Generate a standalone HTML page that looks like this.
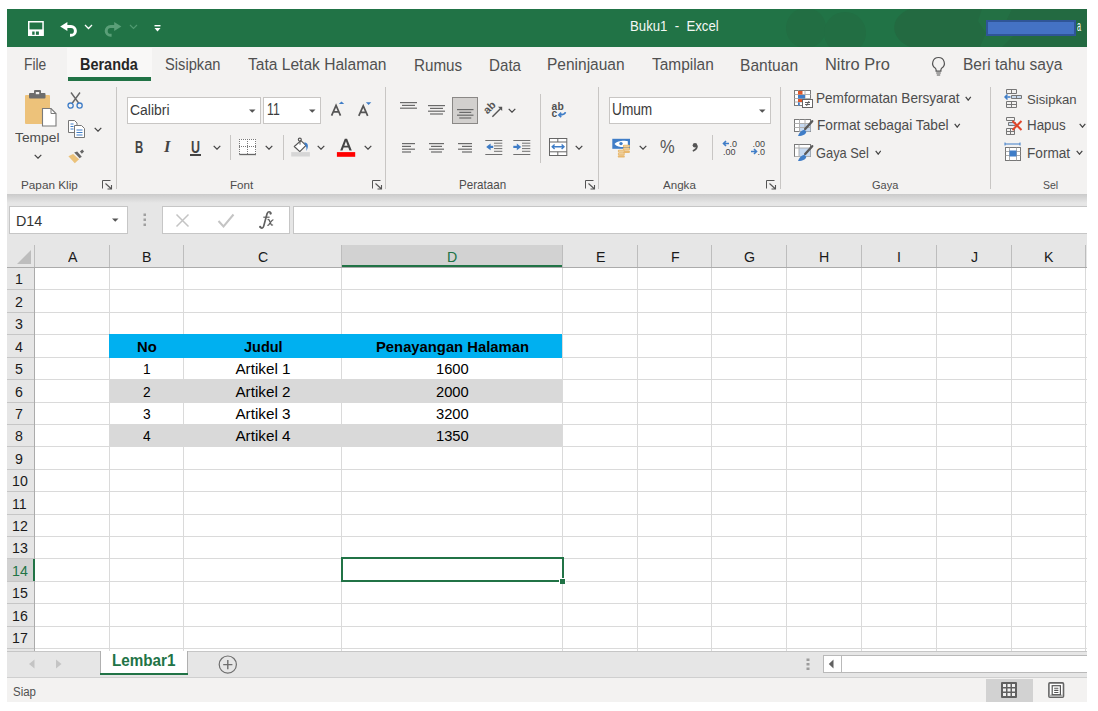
<!DOCTYPE html><html><head><meta charset="utf-8"><style>html,body{margin:0;padding:0}body{width:1098px;height:711px;position:relative;overflow:hidden;background:#fff;font-family:"Liberation Sans",sans-serif}</style></head><body><div style="position:absolute;left:7px;top:9px;width:1080px;height:38px;background:#217346"></div><div style="position:absolute;left:7px;top:47px;width:1080px;height:147px;background:#F3F2F1"></div><div style="position:absolute;left:7px;top:194px;width:1080px;height:73px;background:#E6E6E6"></div><div style="position:absolute;left:7px;top:194px;width:1080px;height:9px;background:linear-gradient(#CACACA,#E6E6E6)"></div><div style="position:absolute;left:7px;top:267px;width:1080px;height:384px;background:#FFFFFF"></div><div style="position:absolute;left:7px;top:651px;width:1080px;height:27px;background:#E6E6E6"></div><div style="position:absolute;left:7px;top:678px;width:1080px;height:24px;background:#F3F2F1"></div><svg style="position:absolute;left:760px;top:9px;" width="327" height="38" viewBox="0 0 327 38"><circle cx="46" cy="19" r="20" fill="#226E43"/><circle cx="85" cy="24" r="21" fill="#226E43"/><path d="M150 0H327V38H150C130 30 128 8 150 0z" fill="#236A41"/><path d="M222 0h30l-6 12 8 14-12 12h-22l6-14-8-12z" fill="#247346" opacity="0.7"/></svg><div style="position:absolute;left:629.60px;top:26.32px;font-size:14.34px;font-weight:400;color:#F4F8F5;line-height:0;white-space:pre;transform-origin:0 0;transform:scaleX(0.9205);">Buku1  -  Excel</div><svg style="position:absolute;left:28px;top:21px;" width="16" height="15" viewBox="0 0 16 15"><rect x="0.75" y="0.75" width="14.3" height="13.6" fill="none" stroke="#fff" stroke-width="1.5"/><rect x="0.5" y="8.4" width="15" height="6.4" fill="#fff"/><rect x="4.2" y="10.5" width="2.4" height="3.3" fill="#217346"/><rect x="7.9" y="10.5" width="3" height="3.3" fill="#217346"/></svg><svg style="position:absolute;left:55px;top:15px;" width="25" height="25" viewBox="0 0 25 25"><path d="M5.2 11.5L12.4 7.1V15.9z" fill="#fff"/><path d="M11 11.5H16A4.4 4.4 0 0 1 16 20.3H15" fill="none" stroke="#fff" stroke-width="3"/></svg><svg style="position:absolute;left:84px;top:23px;" width="9" height="7" viewBox="0 0 9 7"><path d="M1 2l3.5 3.5L8 2" fill="none" stroke="#fff" stroke-width="1.3"/></svg><svg style="position:absolute;left:100px;top:15px;" width="25" height="25" viewBox="0 0 25 25"><path d="M21.4 11.5L14.2 7.1V15.9z" fill="#5A9F78"/><path d="M15.6 11.5H10.6A4.4 4.4 0 0 0 10.6 20.3H11.6" fill="none" stroke="#5A9F78" stroke-width="3"/></svg><svg style="position:absolute;left:129px;top:23px;" width="9" height="7" viewBox="0 0 9 7"><path d="M1 2l3.5 3.5L8 2" fill="none" stroke="#4f9a70" stroke-width="1.2"/></svg><svg style="position:absolute;left:154px;top:24px;" width="8" height="9" viewBox="0 0 8 9"><rect x="0.5" y="1" width="6" height="1.4" fill="#fff"/><path d="M0.5 4h6L3.5 7.5z" fill="#fff"/></svg><div style="position:absolute;left:986px;top:20px;width:90px;height:16px;background:#4472C4;box-sizing:border-box;border:2px solid #2F5597"></div><div style="position:absolute;left:1076.50px;top:26.07px;font-size:14.20px;font-weight:400;color:#fff;line-height:0;white-space:pre;transform-origin:0 0;transform:scaleX(0.5029);">a</div><div style="position:absolute;left:67px;top:48px;width:85px;height:29px;background:#F9F8F7"></div><div style="position:absolute;left:68px;top:77px;width:83px;height:4px;background:#217346"></div><div style="position:absolute;left:23.60px;top:65.19px;font-size:15.59px;font-weight:400;color:#505050;line-height:0;white-space:pre;transform-origin:0 0;transform:scaleX(0.8887);">File</div><div style="position:absolute;left:164.50px;top:65.19px;font-size:15.59px;font-weight:400;color:#505050;line-height:0;white-space:pre;transform-origin:0 0;transform:scaleX(0.9420);">Sisipkan</div><div style="position:absolute;left:248.20px;top:65.19px;font-size:15.59px;font-weight:400;color:#505050;line-height:0;white-space:pre;transform-origin:0 0;transform:scaleX(0.9997);">Tata Letak Halaman</div><div style="position:absolute;left:413.80px;top:64.92px;font-size:16.38px;font-weight:400;color:#505050;line-height:0;white-space:pre;transform-origin:0 0;transform:scaleX(0.9284);">Rumus</div><div style="position:absolute;left:488.90px;top:64.92px;font-size:16.38px;font-weight:400;color:#505050;line-height:0;white-space:pre;transform-origin:0 0;transform:scaleX(0.9268);">Data</div><div style="position:absolute;left:547.10px;top:65.19px;font-size:15.59px;font-weight:400;color:#505050;line-height:0;white-space:pre;transform-origin:0 0;transform:scaleX(0.9948);">Peninjauan</div><div style="position:absolute;left:651.70px;top:65.19px;font-size:15.59px;font-weight:400;color:#505050;line-height:0;white-space:pre;transform-origin:0 0;transform:scaleX(0.9913);">Tampilan</div><div style="position:absolute;left:740.30px;top:64.92px;font-size:16.38px;font-weight:400;color:#505050;line-height:0;white-space:pre;transform-origin:0 0;transform:scaleX(0.9524);">Bantuan</div><div style="position:absolute;left:824.80px;top:65.19px;font-size:15.59px;font-weight:400;color:#505050;line-height:0;white-space:pre;transform-origin:0 0;transform:scaleX(1.0539);">Nitro Pro</div><div style="position:absolute;left:963.00px;top:65.19px;font-size:15.59px;font-weight:400;color:#505050;line-height:0;white-space:pre;transform-origin:0 0;transform:scaleX(0.9983);">Beri tahu saya</div><div style="position:absolute;left:80.20px;top:65.19px;font-size:15.59px;font-weight:700;color:#262626;line-height:0;white-space:pre;transform-origin:0 0;transform:scaleX(0.9280);">Beranda</div><svg style="position:absolute;left:930px;top:56px;" width="17" height="20" viewBox="0 0 17 20"><path d="M8.5 1.5a5.8 5.8 0 0 0-3.3 10.6c.6.5.9 1.2.9 2v1h4.8v-1c0-.8.3-1.5.9-2A5.8 5.8 0 0 0 8.5 1.5z" fill="none" stroke="#555" stroke-width="1.2"/><path d="M6.2 17h4.6M6.8 19h3.4" stroke="#555" stroke-width="1.2"/></svg><div style="position:absolute;left:116px;top:87px;width:1px;height:102px;background:#C8C6C4"></div><div style="position:absolute;left:385px;top:87px;width:1px;height:102px;background:#C8C6C4"></div><div style="position:absolute;left:598px;top:87px;width:1px;height:102px;background:#C8C6C4"></div><div style="position:absolute;left:780px;top:87px;width:1px;height:102px;background:#C8C6C4"></div><div style="position:absolute;left:990px;top:87px;width:1px;height:102px;background:#C8C6C4"></div><div style="position:absolute;left:230px;top:135px;width:1px;height:25px;background:#C8C6C4"></div><div style="position:absolute;left:283px;top:135px;width:1px;height:25px;background:#C8C6C4"></div><div style="position:absolute;left:540px;top:94px;width:1px;height:69px;background:#C8C6C4"></div><div style="position:absolute;left:712px;top:135px;width:1px;height:25px;background:#C8C6C4"></div><svg style="position:absolute;left:24px;top:89px;" width="36" height="40" viewBox="0 0 36 40"><rect x="1" y="6" width="25" height="29" rx="1" fill="#EDC27A"/><rect x="5" y="4" width="16.5" height="5.5" rx="1" fill="#6D6D6D"/><rect x="10" y="1" width="7" height="5" rx="1" fill="#6D6D6D"/><rect x="11.8" y="3" width="3.4" height="2.2" fill="#F3F2F1"/><path d="M18.5 19.5h8.5l5 5v12.5h-13.5z" fill="#fff" stroke="#7a7a7a" stroke-width="1.1"/><path d="M27 19.5v5h5" fill="none" stroke="#7a7a7a" stroke-width="1"/></svg><div style="position:absolute;left:15.00px;top:138.36px;font-size:13.38px;font-weight:400;color:#4d4d4d;line-height:0;white-space:pre;transform-origin:0 0;transform:scaleX(1.0313);">Tempel</div><svg style="position:absolute;left:34px;top:154px;" width="8" height="5" viewBox="0 0 8 5"><path d="M0.7 0.8L4.0 4.2L7.3 0.8" fill="none" stroke="#444" stroke-width="1.2"/></svg><svg style="position:absolute;left:66px;top:91px;" width="19" height="19" viewBox="0 0 19 19"><path d="M5 1.5l8 11M14 1.5l-8 11" stroke="#666" stroke-width="1.4"/><circle cx="4.6" cy="14.6" r="2.6" fill="none" stroke="#3f7dc7" stroke-width="1.3"/><circle cx="13.6" cy="14.6" r="2.6" fill="none" stroke="#3f7dc7" stroke-width="1.3"/></svg><svg style="position:absolute;left:68px;top:120px;" width="18" height="19" viewBox="0 0 18 19"><path d="M0.5 0.5h6l2.5 2.5v9.5H0.5z" fill="#fff" stroke="#777" stroke-width="1"/><path d="M2.5 4h3M2.5 6.5h3M2.5 9h3" stroke="#3f7dc7" stroke-width="1"/><path d="M6.5 5.5h7l3 3V17.5H6.5z" fill="#fff" stroke="#777" stroke-width="1"/><path d="M8.5 10h6M8.5 12.5h6M8.5 15h6" stroke="#3f7dc7" stroke-width="1"/></svg><svg style="position:absolute;left:94px;top:127px;" width="8" height="5" viewBox="0 0 8 5"><path d="M0.7 0.8L4.0 4.2L7.3 0.8" fill="none" stroke="#444" stroke-width="1.2"/></svg><svg style="position:absolute;left:62px;top:144px;" width="26" height="24" viewBox="0 0 26 24"><path d="M6.4 12.2L11.1 10L17.1 15.2L12.8 19.3z" fill="#EBC27A"/><path d="M12.2 8.4L15.2 7.4L19.8 12.7L17.6 14.2z" fill="#666"/><path d="M17.9 7.4L20.3 5.4L22.1 7.6L19.8 9.8z" fill="#666"/></svg><div style="position:absolute;left:21.40px;top:185.12px;font-size:10.90px;font-weight:400;color:#4d4d4d;line-height:0;white-space:pre;transform-origin:0 0;transform:scaleX(1.0781);">Papan Klip</div><svg style="position:absolute;left:102px;top:180px;" width="11" height="10" viewBox="0 0 11 10"><path d="M0.5 8.5V0.5h8" fill="none" stroke="#555" stroke-width="1"/><path d="M3.5 3.5l6 5.5M9.5 5v4h-4" fill="none" stroke="#555" stroke-width="1.1"/></svg><div style="position:absolute;left:127px;top:97px;width:134px;height:27px;background:#fff;box-sizing:border-box;border:1px solid #C8C6C4"></div><div style="position:absolute;left:263px;top:97px;width:58px;height:27px;background:#fff;box-sizing:border-box;border:1px solid #C8C6C4"></div><div style="position:absolute;left:129.70px;top:110.43px;font-size:14.90px;font-weight:400;color:#3b3b3b;line-height:0;white-space:pre;transform-origin:0 0;transform:scaleX(0.9353);">Calibri</div><div style="position:absolute;left:266.80px;top:110.17px;font-size:15.65px;font-weight:400;color:#3b3b3b;line-height:0;white-space:pre;transform-origin:0 0;transform:scaleX(0.7802);">11</div><svg style="position:absolute;left:249px;top:109px;" width="7" height="4" viewBox="0 0 7 4"><path d="M0 0.5h6.5L3.25 3.8z" fill="#555"/></svg><svg style="position:absolute;left:309px;top:109px;" width="7" height="4" viewBox="0 0 7 4"><path d="M0 0.5h6.5L3.25 3.8z" fill="#555"/></svg><svg style="position:absolute;left:330px;top:100px;" width="16" height="17" viewBox="0 0 16 17"><path d="M1.6 15.6L6.05 5.3L10.5 15.6M3.4 11.9h5.3" fill="none" stroke="#555" stroke-width="1.7"/><path d="M8.8 4L11.5 1.5L14.2 4z" fill="#3f7dc7"/></svg><svg style="position:absolute;left:357px;top:100px;" width="16" height="17" viewBox="0 0 16 17"><path d="M1.8 15.8L6.25 5.9L10.7 15.8M3.6 12.3h5.3" fill="none" stroke="#555" stroke-width="1.7"/><path d="M8.9 2.2H14.3L11.6 5z" fill="#3f7dc7"/></svg><div style="position:absolute;left:134.80px;top:147.12px;font-size:16.09px;font-weight:700;color:#444;line-height:0;white-space:pre;transform-origin:0 0;transform:scaleX(0.7080);">B</div><div style="position:absolute;left:164px;top:137px;font-family:'Liberation Serif';font-style:italic;font-weight:700;font-size:16.5px;line-height:20px;color:#444">I</div><div style="position:absolute;left:190.80px;top:147.12px;font-size:16.09px;font-weight:700;color:#444;line-height:0;white-space:pre;transform-origin:0 0;transform:scaleX(0.7770);">U</div><div style="position:absolute;left:190px;top:154px;width:11px;height:1.5px;background:#444"></div><svg style="position:absolute;left:213px;top:145px;" width="8" height="5" viewBox="0 0 8 5"><path d="M0.7 0.8L4.0 4.2L7.3 0.8" fill="none" stroke="#444" stroke-width="1.2"/></svg><svg style="position:absolute;left:239px;top:138px;" width="18" height="18" viewBox="0 0 18 18"><rect x="0.5" y="1" width="16.5" height="15.5" fill="#fff"/><path d="M0 1.5h17M0 8.5h17M0.5 1v15M8.5 1v15M16.5 1v15" fill="none" stroke="#7a7a7a" stroke-width="1" stroke-dasharray="1 1"/><path d="M0.3 16.5h16.6" stroke="#666" stroke-width="1.3"/></svg><svg style="position:absolute;left:265px;top:145px;" width="8" height="5" viewBox="0 0 8 5"><path d="M0.7 0.8L4.0 4.2L7.3 0.8" fill="none" stroke="#444" stroke-width="1.2"/></svg><svg style="position:absolute;left:290px;top:137px;" width="22" height="21" viewBox="0 0 22 21"><path d="M4.3 9.5L10.9 3.6L16 8.4L9.8 14.6z" fill="#fff" stroke="#555" stroke-width="1.2" stroke-linejoin="round"/><circle cx="9.8" cy="2.6" r="1.5" fill="none" stroke="#555" stroke-width="1.1"/><path d="M10 4v3.6" stroke="#555" stroke-width="1"/><path d="M14.3 5.3C17.2 5.6 19.6 8.2 16.4 14C16.7 11 16.2 9 14.8 7.6z" fill="#3f7dc7"/><rect x="1.2" y="15.1" width="18.7" height="4.4" fill="#D6D6D6"/></svg><svg style="position:absolute;left:317px;top:145px;" width="8" height="5" viewBox="0 0 8 5"><path d="M0.7 0.8L4.0 4.2L7.3 0.8" fill="none" stroke="#444" stroke-width="1.2"/></svg><svg style="position:absolute;left:336px;top:137px;" width="20" height="21" viewBox="0 0 20 21"><path fill-rule="evenodd" d="M4.2 13.6L8.8 1.8H11.1L15.8 13.6H13.4L12.3 10.6H7.6L6.5 13.6zM8.3 8.7H11.6L9.95 4.2z" fill="#444"/><rect x="0.9" y="15.1" width="18.3" height="4.7" fill="#FF0000"/></svg><svg style="position:absolute;left:364px;top:145px;" width="8" height="5" viewBox="0 0 8 5"><path d="M0.7 0.8L4.0 4.2L7.3 0.8" fill="none" stroke="#444" stroke-width="1.2"/></svg><div style="position:absolute;left:229.50px;top:184.98px;font-size:11.59px;font-weight:400;color:#4d4d4d;line-height:0;white-space:pre;transform-origin:0 0;transform:scaleX(1.0048);">Font</div><svg style="position:absolute;left:372px;top:180px;" width="11" height="10" viewBox="0 0 11 10"><path d="M0.5 8.5V0.5h8" fill="none" stroke="#555" stroke-width="1"/><path d="M3.5 3.5l6 5.5M9.5 5v4h-4" fill="none" stroke="#555" stroke-width="1.1"/></svg><svg style="position:absolute;left:400px;top:101.5px;" width="20" height="10.399999999999999" viewBox="0 0 20 10.399999999999999"><rect x="0" y="0.0" width="17" height="1.2" fill="#6a6a6a"/><rect x="2" y="2.8" width="13" height="1.2" fill="#6a6a6a"/><rect x="0" y="5.6" width="17" height="1.2" fill="#6a6a6a"/></svg><svg style="position:absolute;left:428px;top:105px;" width="20" height="13.2" viewBox="0 0 20 13.2"><rect x="0" y="0.0" width="17" height="1.2" fill="#6a6a6a"/><rect x="2" y="2.8" width="13" height="1.2" fill="#6a6a6a"/><rect x="0" y="5.6" width="17" height="1.2" fill="#6a6a6a"/><rect x="2" y="8.399999999999999" width="13" height="1.2" fill="#6a6a6a"/></svg><div style="position:absolute;left:452px;top:97px;width:26px;height:27px;background:#D2D0CE;box-sizing:border-box;border:1px solid #8A8886"></div><svg style="position:absolute;left:456.5px;top:109px;" width="20" height="13.2" viewBox="0 0 20 13.2"><rect x="0" y="0.0" width="16.5" height="1.2" fill="#6a6a6a"/><rect x="2.25" y="2.8" width="12" height="1.2" fill="#6a6a6a"/><rect x="0" y="5.6" width="16.5" height="1.2" fill="#6a6a6a"/><rect x="2.25" y="8.399999999999999" width="12" height="1.2" fill="#6a6a6a"/></svg><svg style="position:absolute;left:480px;top:98px;" width="26" height="24" viewBox="0 0 26 24"><text transform="translate(7.4 16.4) rotate(-45)" font-family="Liberation Sans" font-size="10.8" font-weight="700" fill="#555">ab</text><path d="M12.4 18.8L20.6 10.6" fill="none" stroke="#555" stroke-width="1.4"/><path d="M18 8.8h4.2v4.2z" fill="#555"/></svg><svg style="position:absolute;left:508px;top:108px;" width="8" height="5" viewBox="0 0 8 5"><path d="M0.7 0.8L4.0 4.2L7.3 0.8" fill="none" stroke="#444" stroke-width="1.2"/></svg><svg style="position:absolute;left:546px;top:98px;" width="24" height="22" viewBox="0 0 24 22"><text x="5.4" y="11.7" font-family="Liberation Sans" font-size="10.3" font-weight="700" letter-spacing="0.4" fill="#505050">ab</text><text x="5.4" y="19.3" font-family="Liberation Sans" font-size="10.3" font-weight="700" fill="#505050">c</text><path d="M19.4 14.2C19.2 16.2 17.5 16.9 13.5 16.9M15.2 14.6L12.8 16.9L15.2 19.2" fill="none" stroke="#3f7dc7" stroke-width="1.6"/></svg><svg style="position:absolute;left:402px;top:142.5px;" width="20" height="13.2" viewBox="0 0 20 13.2"><rect x="0" y="0.0" width="13" height="1.2" fill="#6a6a6a"/><rect x="0" y="2.8" width="9" height="1.2" fill="#6a6a6a"/><rect x="0" y="5.6" width="13" height="1.2" fill="#6a6a6a"/><rect x="0" y="8.399999999999999" width="9" height="1.2" fill="#6a6a6a"/></svg><svg style="position:absolute;left:429px;top:142.5px;" width="20" height="13.2" viewBox="0 0 20 13.2"><rect x="0" y="0.0" width="15" height="1.2" fill="#6a6a6a"/><rect x="2" y="2.8" width="11" height="1.2" fill="#6a6a6a"/><rect x="0" y="5.6" width="15" height="1.2" fill="#6a6a6a"/><rect x="2" y="8.399999999999999" width="11" height="1.2" fill="#6a6a6a"/></svg><svg style="position:absolute;left:457.5px;top:142.5px;" width="20" height="13.2" viewBox="0 0 20 13.2"><rect x="0" y="0.0" width="14" height="1.2" fill="#6a6a6a"/><rect x="4" y="2.8" width="10" height="1.2" fill="#6a6a6a"/><rect x="0" y="5.6" width="14" height="1.2" fill="#6a6a6a"/><rect x="4" y="8.399999999999999" width="10" height="1.2" fill="#6a6a6a"/></svg><svg style="position:absolute;left:485px;top:139px;" width="18" height="17" viewBox="0 0 18 17"><path d="M0.3 1.5h17M0.3 15.5h17M9 4.2h8.3M9 6.9h8.3M9 9.6h8.3M9 12.3h8.3" stroke="#707070" stroke-width="1"/><path d="M8.2 7.9H2.8" stroke="#3f7dc7" stroke-width="2.2"/><path d="M5.6 4.6L1.2 7.9L5.6 11.2z" fill="#3f7dc7"/></svg><svg style="position:absolute;left:513px;top:139px;" width="18" height="17" viewBox="0 0 18 17"><path d="M0.3 1.5h17M0.3 15.5h17M9 4.2h8.3M9 6.9h8.3M9 9.6h8.3M9 12.3h8.3" stroke="#707070" stroke-width="1"/><path d="M0.3 7.9H5.6" stroke="#3f7dc7" stroke-width="2.2"/><path d="M3.8 4.6L8.2 7.9L3.8 11.2z" fill="#3f7dc7"/></svg><svg style="position:absolute;left:548px;top:137px;" width="20" height="20" viewBox="0 0 20 20"><rect x="1.5" y="1.5" width="17.3" height="17" fill="#fff" stroke="#666" stroke-width="1"/><path d="M1.5 5h17.3M1.5 14.8h17.3M9.8 1.5v3.5M9.8 14.8v3.7" stroke="#666" stroke-width="1"/><path d="M4.2 9.8h11.8M6.6 7.6L4.2 9.8l2.4 2.2M13.6 7.6L16 9.8l-2.4 2.2" fill="none" stroke="#3f7dc7" stroke-width="1.4"/></svg><svg style="position:absolute;left:575px;top:145px;" width="8" height="5" viewBox="0 0 8 5"><path d="M0.7 0.8L4.0 4.2L7.3 0.8" fill="none" stroke="#444" stroke-width="1.2"/></svg><div style="position:absolute;left:458.50px;top:184.78px;font-size:11.88px;font-weight:400;color:#4d4d4d;line-height:0;white-space:pre;transform-origin:0 0;transform:scaleX(0.9783);">Perataan</div><svg style="position:absolute;left:585px;top:180px;" width="11" height="10" viewBox="0 0 11 10"><path d="M0.5 8.5V0.5h8" fill="none" stroke="#555" stroke-width="1"/><path d="M3.5 3.5l6 5.5M9.5 5v4h-4" fill="none" stroke="#555" stroke-width="1.1"/></svg><div style="position:absolute;left:609px;top:97px;width:162px;height:27px;background:#fff;box-sizing:border-box;border:1px solid #C8C6C4"></div><div style="position:absolute;left:611.90px;top:110.37px;font-size:15.65px;font-weight:400;color:#3b3b3b;line-height:0;white-space:pre;transform-origin:0 0;transform:scaleX(0.8743);">Umum</div><svg style="position:absolute;left:759px;top:109px;" width="7" height="4" viewBox="0 0 7 4"><path d="M0 0.5h6.5L3.25 3.8z" fill="#555"/></svg><svg style="position:absolute;left:611px;top:138px;" width="21" height="20" viewBox="0 0 21 20"><rect x="1.3" y="0.8" width="17.7" height="10" fill="#3f7dc7"/><path d="M3.5 6C6 2.3 14 2.3 16.8 3.2V8.6C14 9.5 6 9.5 3.5 6z" fill="#fff"/><circle cx="10" cy="5.6" r="1.7" fill="#3f7dc7"/><g fill="#E8B86E"><rect x="11.8" y="6.8" width="7.2" height="2.6" rx="1.3"/><rect x="11.8" y="9.6" width="7.2" height="2.6" rx="1.3"/><rect x="11.8" y="12.4" width="7.2" height="2.6" rx="1.3"/><rect x="6.8" y="11.8" width="7" height="2.6" rx="1.3"/><rect x="6.8" y="14.6" width="7" height="2.6" rx="1.3"/><rect x="6.8" y="17.2" width="7" height="2.4" rx="1.2"/></g><g fill="#F6E3C2"><rect x="12.8" y="7.7" width="5.2" height="0.8"/><rect x="12.8" y="10.5" width="5.2" height="0.8"/><rect x="7.8" y="12.7" width="5" height="0.8"/><rect x="7.8" y="15.5" width="5" height="0.8"/></g></svg><svg style="position:absolute;left:639px;top:145px;" width="8" height="5" viewBox="0 0 8 5"><path d="M0.7 0.8L4.0 4.2L7.3 0.8" fill="none" stroke="#444" stroke-width="1.2"/></svg><div style="position:absolute;left:659.70px;top:147.31px;font-size:18.99px;font-weight:400;color:#555;line-height:0;white-space:pre;transform-origin:0 0;transform:scaleX(0.8696);">%</div><svg style="position:absolute;left:690px;top:142px;" width="9" height="10" viewBox="0 0 9 10"><circle cx="5" cy="3.3" r="2.3" fill="#555"/><path d="M7.1 3.6C7 6.4 5.6 8 2.8 8.9" fill="none" stroke="#555" stroke-width="1.6"/></svg><svg style="position:absolute;left:722px;top:139px;" width="16" height="17" viewBox="0 0 16 17"><path d="M7 4.5H1.5M4 2L1.5 4.5 4 7" fill="none" stroke="#3f7dc7" stroke-width="1.6"/><text x="7.5" y="8" font-family="Liberation Sans" font-size="9" fill="#444">.0</text><text x="1" y="16" font-family="Liberation Sans" font-size="9" fill="#444">.00</text></svg><svg style="position:absolute;left:750px;top:139px;" width="17" height="17" viewBox="0 0 17 17"><text x="2.6" y="8" font-family="Liberation Sans" font-size="9" fill="#444">.00</text><path d="M1 12.5H6.5M4 10l2.5 2.5L4 15" fill="none" stroke="#3f7dc7" stroke-width="1.6"/><text x="7.5" y="16" font-family="Liberation Sans" font-size="9" fill="#444">.0</text></svg><div style="position:absolute;left:663.10px;top:185.07px;font-size:10.76px;font-weight:400;color:#4d4d4d;line-height:0;white-space:pre;transform-origin:0 0;transform:scaleX(1.0768);">Angka</div><svg style="position:absolute;left:766px;top:180px;" width="11" height="10" viewBox="0 0 11 10"><path d="M0.5 8.5V0.5h8" fill="none" stroke="#555" stroke-width="1"/><path d="M3.5 3.5l6 5.5M9.5 5v4h-4" fill="none" stroke="#555" stroke-width="1.1"/></svg><svg style="position:absolute;left:794px;top:90px;" width="20" height="19" viewBox="0 0 20 19"><rect x="0.5" y="0.5" width="16" height="15" fill="#fff" stroke="#7a7a7a"/><path d="M4.5 0.5v15M11 0.5v15M0.5 4.5h16M0.5 8.5h16M0.5 12h16" stroke="#b0b0b0" stroke-width="1"/><rect x="4" y="1" width="4.5" height="3.5" fill="#E0572A"/><rect x="4" y="5" width="7" height="3.5" fill="#3f7dc7"/><rect x="4" y="9" width="4" height="3" fill="#E0572A"/><rect x="4" y="12.5" width="1.8" height="3" fill="#3f7dc7"/><rect x="8.5" y="9.5" width="10" height="8" fill="#fff" stroke="#666"/><path d="M11 12.5h5M11 14.5h5M15 11l-2.5 5" stroke="#555" stroke-width="0.9"/></svg><div style="position:absolute;left:816.30px;top:99.31px;font-size:13.79px;font-weight:400;color:#4d4d4d;line-height:0;white-space:pre;transform-origin:0 0;transform:scaleX(0.9859);">Pemformatan Bersyarat</div><svg style="position:absolute;left:965px;top:96px;" width="6.5" height="5" viewBox="0 0 6.5 5"><path d="M0.7 0.8L3.2 4.2L5.8 0.8" fill="none" stroke="#444" stroke-width="1.2"/></svg><svg style="position:absolute;left:794px;top:118px;" width="20" height="19" viewBox="0 0 20 19"><rect x="0.5" y="1.5" width="16" height="12" fill="#fff" stroke="#7a7a7a"/><rect x="5.5" y="5.5" width="11" height="8" fill="#C5D9F1"/><path d="M5.5 1.5v12M11 1.5v12M0.5 5.5h16M0.5 9.5h16" stroke="#b0b0b0" stroke-width="1"/><path d="M18.2 3.2L11.2 11" stroke="#5a5a5a" stroke-width="2.4" stroke-linecap="round"/><path d="M4 18c1-3.6 3.5-5.6 6.3-6.3l2 2c-.5 2.6-3 4.3-8.3 4.3z" fill="#3f7dc7"/></svg><div style="position:absolute;left:816.90px;top:125.71px;font-size:13.79px;font-weight:400;color:#4d4d4d;line-height:0;white-space:pre;transform-origin:0 0;transform:scaleX(0.9946);">Format sebagai Tabel</div><svg style="position:absolute;left:954px;top:123px;" width="6.5" height="5" viewBox="0 0 6.5 5"><path d="M0.7 0.8L3.2 4.2L5.8 0.8" fill="none" stroke="#444" stroke-width="1.2"/></svg><svg style="position:absolute;left:794px;top:143px;" width="20" height="19" viewBox="0 0 20 19"><rect x="0.5" y="1.5" width="16" height="12" fill="#fff" stroke="#7a7a7a"/><rect x="5" y="5" width="11.5" height="8.5" fill="#C5D9F1"/><path d="M0.5 5h16M0.5 13.5h16M5 1.5v12" stroke="#b0b0b0" stroke-width="1"/><path d="M18.2 3.2L11.2 11" stroke="#5a5a5a" stroke-width="2.4" stroke-linecap="round"/><path d="M4 18c1-3.6 3.5-5.6 6.3-6.3l2 2c-.5 2.6-3 4.3-8.3 4.3z" fill="#3f7dc7"/></svg><div style="position:absolute;left:816.30px;top:153.07px;font-size:13.93px;font-weight:400;color:#4d4d4d;line-height:0;white-space:pre;transform-origin:0 0;transform:scaleX(0.9228);">Gaya Sel</div><svg style="position:absolute;left:874.5px;top:150px;" width="6.5" height="5" viewBox="0 0 6.5 5"><path d="M0.7 0.8L3.2 4.2L5.8 0.8" fill="none" stroke="#444" stroke-width="1.2"/></svg><div style="position:absolute;left:871.80px;top:185.13px;font-size:11.14px;font-weight:400;color:#4d4d4d;line-height:0;white-space:pre;transform-origin:0 0;transform:scaleX(0.9892);">Gaya</div><svg style="position:absolute;left:1004px;top:89px;" width="19" height="20" viewBox="0 0 19 20"><path d="M2.5 0.5h10v4h-10zM2.5 12.5h10v6h-10zM7.5 0.5v4M2.5 15.5h10M7.5 12.5v6" fill="none" stroke="#777" stroke-width="1"/><path d="M7.5 6.5h10v3h-10zM12.5 6.5v3" fill="#C9D9EC" stroke="#777" stroke-width="1"/><path d="M6.5 8h-5M3.5 5.5L1 8l2.5 2.5" fill="none" stroke="#3f7dc7" stroke-width="1.5"/></svg><div style="position:absolute;left:1026.80px;top:99.55px;font-size:13.10px;font-weight:400;color:#4d4d4d;line-height:0;white-space:pre;transform-origin:0 0;transform:scaleX(1.0014);">Sisipkan</div><svg style="position:absolute;left:1004px;top:117px;" width="20" height="18" viewBox="0 0 20 18"><path d="M2.5 0.5h8v3h-8zM2.5 11.5h8v6h-8zM6.5 11.5v6M2.5 14.5h8" fill="none" stroke="#777" stroke-width="1"/><path d="M4.5 5.5h7v3h-7z" fill="#C9D9EC" stroke="#777" stroke-width="1"/><path d="M8.5 4l9 9M17.5 4l-9 9" stroke="#E0452A" stroke-width="2"/></svg><div style="position:absolute;left:1026.80px;top:126.22px;font-size:13.77px;font-weight:400;color:#4d4d4d;line-height:0;white-space:pre;transform-origin:0 0;transform:scaleX(0.9701);">Hapus</div><svg style="position:absolute;left:1078.5px;top:123px;" width="7" height="5" viewBox="0 0 7 5"><path d="M0.7 0.8L3.5 4.2L6.3 0.8" fill="none" stroke="#444" stroke-width="1.2"/></svg><svg style="position:absolute;left:1004px;top:142px;" width="20" height="21" viewBox="0 0 20 21"><path d="M1 2h15" stroke="#3f7dc7" stroke-width="1"/><path d="M1 0.5v3M16 0.5v3" stroke="#3f7dc7"/><rect x="1.5" y="5.5" width="15" height="13" fill="#fff" stroke="#777"/><path d="M1.5 9.5h15M1.5 13.5h15M5.5 5.5v13M12.5 5.5v13" stroke="#999" stroke-width="0.8"/><rect x="5.5" y="8.5" width="7" height="6" fill="#3f7dc7"/></svg><div style="position:absolute;left:1026.80px;top:153.17px;font-size:13.91px;font-weight:400;color:#4d4d4d;line-height:0;white-space:pre;transform-origin:0 0;transform:scaleX(0.9788);">Format</div><svg style="position:absolute;left:1075.5px;top:150px;" width="7" height="5" viewBox="0 0 7 5"><path d="M0.7 0.8L3.5 4.2L6.3 0.8" fill="none" stroke="#444" stroke-width="1.2"/></svg><div style="position:absolute;left:1043.30px;top:185.17px;font-size:11.03px;font-weight:400;color:#4d4d4d;line-height:0;white-space:pre;transform-origin:0 0;transform:scaleX(0.9533);">Sel</div><div style="position:absolute;left:9px;top:206px;width:119px;height:28px;background:#fff;box-sizing:border-box;border:1px solid #C6C6C6"></div><div style="position:absolute;left:15.90px;top:220.52px;font-size:15.22px;font-weight:400;color:#333;line-height:0;white-space:pre;transform-origin:0 0;transform:scaleX(0.9418);">D14</div><svg style="position:absolute;left:112px;top:218px;" width="7" height="4" viewBox="0 0 7 4"><path d="M0 0.5h6.5L3.25 3.8z" fill="#555"/></svg><svg style="position:absolute;left:143px;top:213px;" width="4" height="14" viewBox="0 0 4 14"><rect x="0.5" y="0.5" width="2.5" height="2.5" fill="#A0A0A0"/><rect x="0.5" y="5.5" width="2.5" height="2.5" fill="#A0A0A0"/><rect x="0.5" y="10.5" width="2.5" height="2.5" fill="#A0A0A0"/></svg><div style="position:absolute;left:162px;top:206px;width:128px;height:28px;background:#fff;box-sizing:border-box;border:1px solid #C6C6C6"></div><svg style="position:absolute;left:175px;top:213px;" width="16" height="15" viewBox="0 0 16 15"><path d="M1.5 1.5l12 12M13.5 1.5l-12 12" stroke="#C4C4C4" stroke-width="1.5"/></svg><svg style="position:absolute;left:217px;top:213px;" width="18" height="15" viewBox="0 0 18 15"><path d="M1.5 8l5 5.5L16.5 1.5" fill="none" stroke="#C4C4C4" stroke-width="2"/></svg><svg style="position:absolute;left:250px;top:206px;" width="30" height="28" viewBox="0 0 30 28"><path d="M20.8 7.4C20.4 5.3 18.2 5 17.1 7.6L13.7 20.1C13.1 22.5 11 22.6 10.1 20.9" fill="none" stroke="#606060" stroke-width="1.7"/><circle cx="20.6" cy="7.5" r="1.15" fill="#606060"/><circle cx="10.2" cy="20.8" r="1.15" fill="#606060"/><path d="M13.3 11.2H19.6" stroke="#606060" stroke-width="1.2"/><path d="M17.6 13.6C18.6 13.2 19.3 13.8 19.8 15.5L21 18.2C21.4 19.2 22.2 19.3 22.9 18.6M23.4 13.8C22.3 13.6 20.8 15.6 18.7 18.9C18.2 19.5 17.8 19.4 17.4 19.1" fill="none" stroke="#606060" stroke-width="1.3"/></svg><div style="position:absolute;left:293px;top:206px;width:794px;height:28px;background:#fff;border-top:1px solid #C6C6C6;border-bottom:1px solid #C6C6C6;border-left:1px solid #C6C6C6;box-sizing:border-box"></div><div style="position:absolute;left:342px;top:245px;width:220px;height:22px;background:#D2D2D2"></div><div style="position:absolute;left:341px;top:265px;width:222px;height:2px;background:#217346"></div><div style="position:absolute;left:34px;top:245px;width:1px;height:22px;background:#BDBDBD"></div><div style="position:absolute;left:109px;top:245px;width:1px;height:22px;background:#BDBDBD"></div><div style="position:absolute;left:183px;top:245px;width:1px;height:22px;background:#BDBDBD"></div><div style="position:absolute;left:341px;top:245px;width:1px;height:22px;background:#BDBDBD"></div><div style="position:absolute;left:562px;top:245px;width:1px;height:22px;background:#BDBDBD"></div><div style="position:absolute;left:637px;top:245px;width:1px;height:22px;background:#BDBDBD"></div><div style="position:absolute;left:711px;top:245px;width:1px;height:22px;background:#BDBDBD"></div><div style="position:absolute;left:786px;top:245px;width:1px;height:22px;background:#BDBDBD"></div><div style="position:absolute;left:861px;top:245px;width:1px;height:22px;background:#BDBDBD"></div><div style="position:absolute;left:936px;top:245px;width:1px;height:22px;background:#BDBDBD"></div><div style="position:absolute;left:1011px;top:245px;width:1px;height:22px;background:#BDBDBD"></div><div style="position:absolute;left:1085px;top:245px;width:1px;height:22px;background:#BDBDBD"></div><div style="position:absolute;left:7px;top:267px;width:1080px;height:1px;background:#ABABAB"></div><svg style="position:absolute;left:17px;top:250px;" width="15" height="14" viewBox="0 0 15 14"><path d="M14 0V14H0z" fill="#BDBDBD"/></svg><div style="position:absolute;left:7px;top:268px;width:27px;height:383px;background:#E6E6E6"></div><div style="position:absolute;left:7px;top:559px;width:26px;height:22px;background:#D2D2D2"></div><div style="position:absolute;left:35px;top:289px;width:1052px;height:1px;background:#DADADA"></div><div style="position:absolute;left:7px;top:289px;width:27px;height:1px;background:#C6C6C6"></div><div style="position:absolute;left:35px;top:312px;width:1052px;height:1px;background:#DADADA"></div><div style="position:absolute;left:7px;top:312px;width:27px;height:1px;background:#C6C6C6"></div><div style="position:absolute;left:35px;top:334px;width:1052px;height:1px;background:#DADADA"></div><div style="position:absolute;left:7px;top:334px;width:27px;height:1px;background:#C6C6C6"></div><div style="position:absolute;left:35px;top:357px;width:1052px;height:1px;background:#DADADA"></div><div style="position:absolute;left:7px;top:357px;width:27px;height:1px;background:#C6C6C6"></div><div style="position:absolute;left:35px;top:379px;width:1052px;height:1px;background:#DADADA"></div><div style="position:absolute;left:7px;top:379px;width:27px;height:1px;background:#C6C6C6"></div><div style="position:absolute;left:35px;top:402px;width:1052px;height:1px;background:#DADADA"></div><div style="position:absolute;left:7px;top:402px;width:27px;height:1px;background:#C6C6C6"></div><div style="position:absolute;left:35px;top:424px;width:1052px;height:1px;background:#DADADA"></div><div style="position:absolute;left:7px;top:424px;width:27px;height:1px;background:#C6C6C6"></div><div style="position:absolute;left:35px;top:446px;width:1052px;height:1px;background:#DADADA"></div><div style="position:absolute;left:7px;top:446px;width:27px;height:1px;background:#C6C6C6"></div><div style="position:absolute;left:35px;top:469px;width:1052px;height:1px;background:#DADADA"></div><div style="position:absolute;left:7px;top:469px;width:27px;height:1px;background:#C6C6C6"></div><div style="position:absolute;left:35px;top:491px;width:1052px;height:1px;background:#DADADA"></div><div style="position:absolute;left:7px;top:491px;width:27px;height:1px;background:#C6C6C6"></div><div style="position:absolute;left:35px;top:514px;width:1052px;height:1px;background:#DADADA"></div><div style="position:absolute;left:7px;top:514px;width:27px;height:1px;background:#C6C6C6"></div><div style="position:absolute;left:35px;top:536px;width:1052px;height:1px;background:#DADADA"></div><div style="position:absolute;left:7px;top:536px;width:27px;height:1px;background:#C6C6C6"></div><div style="position:absolute;left:35px;top:558px;width:1052px;height:1px;background:#DADADA"></div><div style="position:absolute;left:7px;top:558px;width:27px;height:1px;background:#C6C6C6"></div><div style="position:absolute;left:35px;top:581px;width:1052px;height:1px;background:#DADADA"></div><div style="position:absolute;left:7px;top:581px;width:27px;height:1px;background:#C6C6C6"></div><div style="position:absolute;left:35px;top:603px;width:1052px;height:1px;background:#DADADA"></div><div style="position:absolute;left:7px;top:603px;width:27px;height:1px;background:#C6C6C6"></div><div style="position:absolute;left:35px;top:626px;width:1052px;height:1px;background:#DADADA"></div><div style="position:absolute;left:7px;top:626px;width:27px;height:1px;background:#C6C6C6"></div><div style="position:absolute;left:35px;top:648px;width:1052px;height:1px;background:#DADADA"></div><div style="position:absolute;left:7px;top:648px;width:27px;height:1px;background:#C6C6C6"></div><div style="position:absolute;left:109px;top:268px;width:1px;height:383px;background:#DADADA"></div><div style="position:absolute;left:183px;top:268px;width:1px;height:383px;background:#DADADA"></div><div style="position:absolute;left:341px;top:268px;width:1px;height:383px;background:#DADADA"></div><div style="position:absolute;left:562px;top:268px;width:1px;height:383px;background:#DADADA"></div><div style="position:absolute;left:637px;top:268px;width:1px;height:383px;background:#DADADA"></div><div style="position:absolute;left:711px;top:268px;width:1px;height:383px;background:#DADADA"></div><div style="position:absolute;left:786px;top:268px;width:1px;height:383px;background:#DADADA"></div><div style="position:absolute;left:861px;top:268px;width:1px;height:383px;background:#DADADA"></div><div style="position:absolute;left:936px;top:268px;width:1px;height:383px;background:#DADADA"></div><div style="position:absolute;left:1011px;top:268px;width:1px;height:383px;background:#DADADA"></div><div style="position:absolute;left:1085px;top:268px;width:1px;height:383px;background:#DADADA"></div><div style="position:absolute;left:34px;top:268px;width:1px;height:383px;background:#ABABAB"></div><div style="position:absolute;left:33px;top:559px;width:2px;height:22px;background:#217346"></div><div style="position:absolute;left:67.65px;top:256.55px;font-size:15.41px;font-weight:400;color:#1a1a1a;line-height:0;white-space:pre;transform-origin:0 0;transform:scaleX(0.9200)">A</div><div style="position:absolute;left:142.19px;top:256.55px;font-size:15.41px;font-weight:400;color:#1a1a1a;line-height:0;white-space:pre;transform-origin:0 0;transform:scaleX(0.9200)">B</div><div style="position:absolute;left:257.80px;top:256.55px;font-size:15.41px;font-weight:400;color:#1a1a1a;line-height:0;white-space:pre;transform-origin:0 0;transform:scaleX(0.9200)">C</div><div style="position:absolute;left:447.30px;top:256.55px;font-size:15.41px;font-weight:400;color:#217346;line-height:0;white-space:pre;transform-origin:0 0;transform:scaleX(0.9200)">D</div><div style="position:absolute;left:595.69px;top:256.55px;font-size:15.41px;font-weight:400;color:#1a1a1a;line-height:0;white-space:pre;transform-origin:0 0;transform:scaleX(0.9200)">E</div><div style="position:absolute;left:670.58px;top:256.55px;font-size:15.41px;font-weight:400;color:#1a1a1a;line-height:0;white-space:pre;transform-origin:0 0;transform:scaleX(0.9200)">F</div><div style="position:absolute;left:743.87px;top:256.55px;font-size:15.41px;font-weight:400;color:#1a1a1a;line-height:0;white-space:pre;transform-origin:0 0;transform:scaleX(0.9200)">G</div><div style="position:absolute;left:819.30px;top:256.55px;font-size:15.41px;font-weight:400;color:#1a1a1a;line-height:0;white-space:pre;transform-origin:0 0;transform:scaleX(0.9200)">H</div><div style="position:absolute;left:897.42px;top:256.55px;font-size:15.41px;font-weight:400;color:#1a1a1a;line-height:0;white-space:pre;transform-origin:0 0;transform:scaleX(0.9200)">I</div><div style="position:absolute;left:970.86px;top:256.55px;font-size:15.41px;font-weight:400;color:#1a1a1a;line-height:0;white-space:pre;transform-origin:0 0;transform:scaleX(0.9200)">J</div><div style="position:absolute;left:1044.19px;top:256.55px;font-size:15.41px;font-weight:400;color:#1a1a1a;line-height:0;white-space:pre;transform-origin:0 0;transform:scaleX(0.9200)">K</div><div style="position:absolute;left:14.66px;top:278.65px;font-size:15.43px;font-weight:400;color:#1a1a1a;line-height:0;white-space:pre;transform-origin:0 0;transform:scaleX(0.9200)">1</div><div style="position:absolute;left:14.66px;top:301.65px;font-size:15.43px;font-weight:400;color:#1a1a1a;line-height:0;white-space:pre;transform-origin:0 0;transform:scaleX(0.9200)">2</div><div style="position:absolute;left:14.66px;top:323.65px;font-size:15.43px;font-weight:400;color:#1a1a1a;line-height:0;white-space:pre;transform-origin:0 0;transform:scaleX(0.9200)">3</div><div style="position:absolute;left:14.66px;top:346.65px;font-size:15.43px;font-weight:400;color:#1a1a1a;line-height:0;white-space:pre;transform-origin:0 0;transform:scaleX(0.9200)">4</div><div style="position:absolute;left:14.66px;top:368.65px;font-size:15.43px;font-weight:400;color:#1a1a1a;line-height:0;white-space:pre;transform-origin:0 0;transform:scaleX(0.9200)">5</div><div style="position:absolute;left:14.66px;top:391.65px;font-size:15.43px;font-weight:400;color:#1a1a1a;line-height:0;white-space:pre;transform-origin:0 0;transform:scaleX(0.9200)">6</div><div style="position:absolute;left:14.66px;top:413.65px;font-size:15.43px;font-weight:400;color:#1a1a1a;line-height:0;white-space:pre;transform-origin:0 0;transform:scaleX(0.9200)">7</div><div style="position:absolute;left:14.66px;top:435.65px;font-size:15.43px;font-weight:400;color:#1a1a1a;line-height:0;white-space:pre;transform-origin:0 0;transform:scaleX(0.9200)">8</div><div style="position:absolute;left:14.66px;top:458.65px;font-size:15.43px;font-weight:400;color:#1a1a1a;line-height:0;white-space:pre;transform-origin:0 0;transform:scaleX(0.9200)">9</div><div style="position:absolute;left:11.82px;top:480.65px;font-size:15.43px;font-weight:400;color:#1a1a1a;line-height:0;white-space:pre;transform-origin:0 0;transform:scaleX(0.9200)">10</div><div style="position:absolute;left:12.32px;top:503.65px;font-size:15.43px;font-weight:400;color:#1a1a1a;line-height:0;white-space:pre;transform-origin:0 0;transform:scaleX(0.9200)">11</div><div style="position:absolute;left:11.82px;top:525.65px;font-size:15.43px;font-weight:400;color:#1a1a1a;line-height:0;white-space:pre;transform-origin:0 0;transform:scaleX(0.9200)">12</div><div style="position:absolute;left:11.82px;top:547.65px;font-size:15.43px;font-weight:400;color:#1a1a1a;line-height:0;white-space:pre;transform-origin:0 0;transform:scaleX(0.9200)">13</div><div style="position:absolute;left:11.82px;top:570.65px;font-size:15.43px;font-weight:400;color:#217346;line-height:0;white-space:pre;transform-origin:0 0;transform:scaleX(0.9200)">14</div><div style="position:absolute;left:11.82px;top:592.65px;font-size:15.43px;font-weight:400;color:#1a1a1a;line-height:0;white-space:pre;transform-origin:0 0;transform:scaleX(0.9200)">15</div><div style="position:absolute;left:11.82px;top:615.65px;font-size:15.43px;font-weight:400;color:#1a1a1a;line-height:0;white-space:pre;transform-origin:0 0;transform:scaleX(0.9200)">16</div><div style="position:absolute;left:11.82px;top:637.65px;font-size:15.43px;font-weight:400;color:#1a1a1a;line-height:0;white-space:pre;transform-origin:0 0;transform:scaleX(0.9200)">17</div><div style="position:absolute;left:109px;top:334px;width:453px;height:24px;background:#00B0F0"></div><div style="position:absolute;left:109px;top:379px;width:453px;height:24px;background:#D9D9D9"></div><div style="position:absolute;left:109px;top:424px;width:453px;height:23px;background:#D9D9D9"></div><div style="position:absolute;left:137.12px;top:346.70px;font-size:15.26px;font-weight:700;color:#000;line-height:0;white-space:pre;transform-origin:0 0;transform:scaleX(0.9700)">No</div><div style="position:absolute;left:243.68px;top:346.70px;font-size:15.26px;font-weight:700;color:#000;line-height:0;white-space:pre;transform-origin:0 0;transform:scaleX(0.9500)">Judul</div><div style="position:absolute;left:375.96px;top:346.70px;font-size:15.26px;font-weight:700;color:#000;line-height:0;white-space:pre;transform-origin:0 0;transform:scaleX(0.9700)">Penayangan Halaman</div><div style="position:absolute;left:143.19px;top:368.70px;font-size:15.26px;font-weight:400;color:#000;line-height:0;white-space:pre;transform-origin:0 0;transform:scaleX(0.9000)">1</div><div style="position:absolute;left:235.45px;top:368.70px;font-size:15.26px;font-weight:400;color:#000;line-height:0;white-space:pre;transform-origin:0 0;transform:scaleX(1.0000)">Artikel 1</div><div style="position:absolute;left:436.12px;top:368.70px;font-size:15.26px;font-weight:400;color:#000;line-height:0;white-space:pre;transform-origin:0 0;transform:scaleX(0.9650)">1600</div><div style="position:absolute;left:143.19px;top:391.70px;font-size:15.26px;font-weight:400;color:#000;line-height:0;white-space:pre;transform-origin:0 0;transform:scaleX(0.9000)">2</div><div style="position:absolute;left:235.45px;top:391.70px;font-size:15.26px;font-weight:400;color:#000;line-height:0;white-space:pre;transform-origin:0 0;transform:scaleX(1.0000)">Artikel 2</div><div style="position:absolute;left:436.12px;top:391.70px;font-size:15.26px;font-weight:400;color:#000;line-height:0;white-space:pre;transform-origin:0 0;transform:scaleX(0.9650)">2000</div><div style="position:absolute;left:143.19px;top:413.70px;font-size:15.26px;font-weight:400;color:#000;line-height:0;white-space:pre;transform-origin:0 0;transform:scaleX(0.9000)">3</div><div style="position:absolute;left:235.45px;top:413.70px;font-size:15.26px;font-weight:400;color:#000;line-height:0;white-space:pre;transform-origin:0 0;transform:scaleX(1.0000)">Artikel 3</div><div style="position:absolute;left:436.12px;top:413.70px;font-size:15.26px;font-weight:400;color:#000;line-height:0;white-space:pre;transform-origin:0 0;transform:scaleX(0.9650)">3200</div><div style="position:absolute;left:143.19px;top:435.70px;font-size:15.26px;font-weight:400;color:#000;line-height:0;white-space:pre;transform-origin:0 0;transform:scaleX(0.9000)">4</div><div style="position:absolute;left:235.45px;top:435.70px;font-size:15.26px;font-weight:400;color:#000;line-height:0;white-space:pre;transform-origin:0 0;transform:scaleX(1.0000)">Artikel 4</div><div style="position:absolute;left:436.12px;top:435.70px;font-size:15.26px;font-weight:400;color:#000;line-height:0;white-space:pre;transform-origin:0 0;transform:scaleX(0.9650)">1350</div><div style="position:absolute;left:341px;top:557px;width:223px;height:25px;box-sizing:border-box;border:2px solid #217346"></div><div style="position:absolute;left:559px;top:578px;width:7px;height:6px;background:#fff"></div><div style="position:absolute;left:560px;top:579px;width:5px;height:5px;background:#217346"></div><div style="position:absolute;left:7px;top:651px;width:1080px;height:1px;background:#C6C6C6"></div><div style="position:absolute;left:100px;top:651px;width:88px;height:24px;background:#fff;border-left:1px solid #B0B0B0;border-right:1px solid #B0B0B0;box-sizing:border-box"></div><div style="position:absolute;left:100px;top:673px;width:88px;height:2px;background:#217346"></div><div style="position:absolute;left:111.70px;top:661.05px;font-size:16.00px;font-weight:700;color:#217346;line-height:0;white-space:pre;transform-origin:0 0;transform:scaleX(0.9517);">Lembar1</div><svg style="position:absolute;left:28px;top:659px;" width="8" height="10" viewBox="0 0 8 10"><path d="M6.5 0.5v9L1 5z" fill="#C4C4C4"/></svg><svg style="position:absolute;left:55px;top:659px;" width="8" height="10" viewBox="0 0 8 10"><path d="M1 0.5v9L6.5 5z" fill="#C4C4C4"/></svg><svg style="position:absolute;left:218px;top:655px;" width="20" height="20" viewBox="0 0 20 20"><circle cx="9.8" cy="9.6" r="8.6" fill="none" stroke="#6E6E6E" stroke-width="1.2"/><path d="M9.8 5v9.2M5.2 9.6h9.2" stroke="#6E6E6E" stroke-width="1.4"/></svg><svg style="position:absolute;left:806px;top:658px;" width="4" height="13" viewBox="0 0 4 13"><rect x="0.5" y="0.5" width="3" height="2.5" fill="#9C9C9C"/><rect x="0.5" y="5" width="3" height="2.5" fill="#9C9C9C"/><rect x="0.5" y="9.5" width="3" height="2.5" fill="#9C9C9C"/></svg><div style="position:absolute;left:823px;top:655px;width:264px;height:18px;background:#fff;border:1px solid #B9B9B9;border-right:none;box-sizing:border-box"></div><div style="position:absolute;left:841px;top:655px;width:1px;height:18px;background:#B9B9B9"></div><svg style="position:absolute;left:828px;top:659px;" width="7" height="10" viewBox="0 0 7 10"><path d="M5.5 0.5v9L0.8 5z" fill="#606060"/></svg><div style="position:absolute;left:7px;top:677px;width:1080px;height:1px;background:#CFCFCF"></div><div style="position:absolute;left:12.60px;top:691.54px;font-size:12.00px;font-weight:400;color:#505050;line-height:0;white-space:pre;transform-origin:0 0;transform:scaleX(0.9542);">Siap</div><div style="position:absolute;left:986px;top:679px;width:47px;height:23px;background:#D2D2D2"></div><svg style="position:absolute;left:1000px;top:681px;" width="18" height="18" viewBox="0 0 18 18"><rect x="1" y="1" width="16" height="16" fill="#606060" rx="1"/><g fill="#F0F0F0"><rect x="3" y="3" width="3" height="3"/><rect x="7.5" y="3" width="3" height="3"/><rect x="12" y="3" width="3" height="3"/><rect x="3" y="7.5" width="3" height="3"/><rect x="7.5" y="7.5" width="3" height="3"/><rect x="12" y="7.5" width="3" height="3"/><rect x="3" y="12" width="3" height="3"/><rect x="7.5" y="12" width="3" height="3"/><rect x="12" y="12" width="3" height="3"/></g></svg><svg style="position:absolute;left:1047px;top:681px;" width="18" height="18" viewBox="0 0 18 18"><rect x="1.9" y="1.9" width="14.6" height="14.4" fill="#fff" stroke="#666" stroke-width="1.6" rx="1"/><rect x="2.7" y="13.6" width="13" height="2" fill="#b4b4b4"/><rect x="5.2" y="4.7" width="8.2" height="9" fill="#fff" stroke="#555" stroke-width="1.2"/><path d="M7.2 7.3h4.2M7.2 9.4h4.2M7.2 11.5h4.2" stroke="#555" stroke-width="1.1"/></svg></body></html>
